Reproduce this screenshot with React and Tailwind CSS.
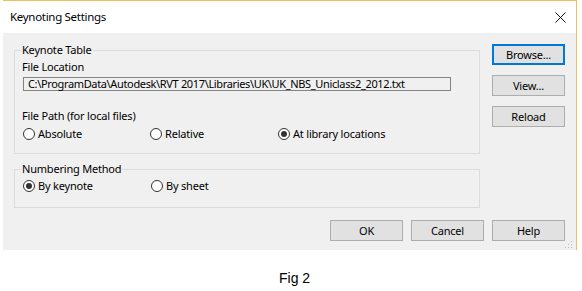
const font = { fontFamily: '"Noto Sans", "Open Sans", sans-serif' };

const Radio = ({ label, checked, width }) => (
  <div className={`flex items-center h-[16px] ${width}`}>
    <span className="w-[12px] h-[12px] rounded-full border border-[#333333] bg-white flex items-center justify-center shrink-0">
      {checked && <span className="w-[6px] h-[6px] rounded-full bg-[#333333]" />}
    </span>
    <span className="ml-[3px]">{label}</span>
  </div>
);

const WinButton = ({ children, focused }) => (
  <button
    className={`w-[73px] h-[21px] flex items-center justify-center bg-[#e1e1e1] text-[11px] leading-none text-black ${
      focused ? "border-2 border-[#0078d7]" : "border border-[#adadad]"
    }`}
  >
    {children}
  </button>
);

const App = () => {
  return (
    <div className="w-[582px] h-[291px] bg-white text-[11px] leading-[16px] tracking-[-0.2px] text-black overflow-hidden" style={font}>
      {/* Dialog */}
      <div className="ml-[3px] w-[574px] border-r border-t border-[#eec258]">
        {/* Title bar */}
        <div className="h-[32px] bg-white flex items-center justify-between pl-[7px] pr-[10px]">
          <span className="text-[11.5px] tracking-[-0.3px]">Keynoting Settings</span>
          <svg width="11" height="11" viewBox="0 0 11 11">
            <path d="M0.5 0.5 L10.5 10.5 M10.5 0.5 L0.5 10.5" stroke="#111" strokeWidth="1" />
          </svg>
        </div>

        {/* Body */}
        <div className="h-[217px] bg-[#f0f0f0] px-[11px] pt-[9px] flex flex-col relative">
          <div className="flex">
            {/* Left column */}
            <div className="w-[466px]">
              <fieldset className="border border-[#dcdcdc] pl-[7px] pb-[11px]">
                <legend className="ml-[-1px] px-[1px] leading-[16px]">Keynote Table</legend>
                <div className="mt-[1px] h-[16px]">File Location</div>
                <div className="mt-[2px] ml-[1px] w-[428px] h-[14px] border border-[#838383] bg-[#f0f0f0] pl-[4px] flex items-center leading-[12px] tracking-[-0.35px] whitespace-nowrap">
                  C:\ProgramData\Autodesk\RVT 2017\Libraries\UK\UK_NBS_Uniclass2_2012.txt
                </div>
                <div className="mt-[17px] h-[16px]">File Path (for local files)</div>
                <div className="mt-[2px] ml-[1px] flex">
                  <Radio label="Absolute" width="w-[127px]" />
                  <Radio label="Relative" width="w-[128px]" />
                  <Radio label="At library locations" checked />
                </div>
              </fieldset>

              <fieldset className="mt-[7px] border border-[#dcdcdc] pl-[7px] pb-[13px]">
                <legend className="ml-[-1px] px-[1px] leading-[16px]">Numbering Method</legend>
                <div className="mt-[1px] ml-[1px] flex">
                  <Radio label="By keynote" checked width="w-[128px]" />
                  <Radio label="By sheet" />
                </div>
              </fieldset>
            </div>

            {/* Right column */}
            <div className="ml-[12px] pt-[2px] flex flex-col gap-[10px]">
              <WinButton focused>Browse...</WinButton>
              <WinButton>View...</WinButton>
              <WinButton>Reload</WinButton>
            </div>
          </div>

          {/* Bottom buttons */}
          <div className="mt-[12px] flex justify-end gap-[8px]">
            <WinButton>OK</WinButton>
            <WinButton>Cancel</WinButton>
            <WinButton>Help</WinButton>
          </div>

          {/* resize grip */}
          <svg className="absolute right-[3px] bottom-[1px]" width="8" height="8" viewBox="0 0 8 8">
            <rect x="6" y="0" width="1" height="1" fill="#bdbdbd" />
            <rect x="3" y="3" width="1" height="1" fill="#bdbdbd" />
            <rect x="6" y="3" width="1" height="1" fill="#bdbdbd" />
            <rect x="0" y="6" width="1" height="1" fill="#bdbdbd" />
            <rect x="3" y="6" width="1" height="1" fill="#bdbdbd" />
            <rect x="6" y="6" width="1" height="1" fill="#bdbdbd" />
          </svg>
        </div>
      </div>

      {/* Caption */}
      <div className="pl-[279px] pt-[19px] text-[14px] leading-[18px] tracking-normal" style={{ fontFamily: '"Liberation Sans", sans-serif' }}>
        Fig 2
      </div>
    </div>
  );
};

export default App;
